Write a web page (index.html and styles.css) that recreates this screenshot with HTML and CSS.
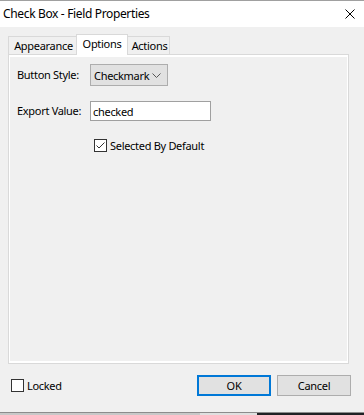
FILE: index.html
```html
<!DOCTYPE html>
<html>
<head>
<meta charset="utf-8">
<link rel="stylesheet" href="styles.css">
</head>
<body>
<div class="window">
  <div class="topline"></div>
  <div class="titlebar">
    <span class="title">Check Box - Field Properties</span>
    <svg class="close" width="10" height="10" viewBox="0 0 10 10"><path d="M0.5 0.5 L9.5 9.5 M9.5 0.5 L0.5 9.5" stroke="#000" stroke-width="1" fill="none"/></svg>
  </div>
  <div class="tabs">
    <div class="tab tab-appearance">Appearance</div>
    <div class="tab tab-options active">Options</div>
    <div class="tab tab-actions">Actions</div>
  </div>
  <div class="panel">
    <div class="page">
      <div class="form">
        <span class="label">Button Style:</span>
        <div class="select">
          <span>Checkmark</span>
          <svg class="chev" width="9" height="5" viewBox="0 0 9 5"><path d="M0.5 0.5 L4.5 4.5 L8.5 0.5" stroke="#555" stroke-width="1" fill="none"/></svg>
        </div>
        <span class="label">Export Value:</span>
        <div class="input">checked</div>
        <span></span>
        <div class="check default-check">
          <span class="box">
            <svg width="11" height="11" viewBox="0 0 11 11"><path d="M1.5 5.5 L4 8 L9.5 2.5" stroke="#333" stroke-width="1" fill="none"/></svg>
          </span>
          <span>Selected By Default</span>
        </div>
      </div>
    </div>
  </div>
  <div class="footer">
    <div class="check locked">
      <span class="box"></span>
      <span>Locked</span>
    </div>
    <div class="buttons">
      <div class="btn primary">OK</div>
      <div class="btn">Cancel</div>
    </div>
  </div>
  <div class="taskbar">
    <div class="seg seg1"></div>
    <div class="seg seg2"></div>
    <div class="seg seg3"></div>
  </div>
</div>
</body>
</html>
```

FILE: styles.css
```css
* { box-sizing: border-box; }
html, body {
  margin: 0;
  padding: 0;
}
body {
  width: 364px;
  height: 415px;
  overflow: hidden;
  background: #f0f0f0;
  font-family: "Noto Sans", "Open Sans", sans-serif;
  font-size: 11px;
  letter-spacing: -0.3px;
  color: #000;
}
.window {
  display: flex;
  flex-direction: column;
  width: 364px;
  height: 415px;
  background: #f0f0f0;
}
.topline {
  height: 1px;
  background: #a0a0a0;
}
.titlebar {
  height: 26px;
  background: #fff;
  display: flex;
  align-items: center;
  justify-content: space-between;
  padding: 0 9px 0 3px;
}
.title {
  font-size: 12px;
  line-height: 16px;
  letter-spacing: -0.35px;
}
.close { display: block; }

.tabs {
  display: flex;
  align-items: flex-end;
  margin: 7px 0 0 8px;
  height: 20px;
  position: relative;
  z-index: 2;
}
.tab {
  height: 18px;
  border: 1px solid #d9d9d9;
  border-bottom: none;
  background: #f0f0f0;
  display: flex;
  align-items: center;
  justify-content: center;
  line-height: 14px;
  padding-top: 1px;
}
.tab-appearance { width: 69px; padding-left: 2px; }
.tab-options { width: 52px; margin-left: -1px; }
.tab-actions { width: 43px; margin-left: -1px; padding-left: 2px; }
.tab.active {
  height: 21px;
  margin-bottom: -1px;
  background: #fff;
  padding-top: 0;
  padding-bottom: 2px;
}
.panel {
  margin: 0 15px 0 8px;
  height: 310px;
  border: 1px solid #d9d9d9;
  background: #fff;
  padding: 2px 1px 2px 1px;
}
.page {
  height: 100%;
  background: #f0f0f0;
  padding: 7px 0 0 7px;
}
.form {
  display: grid;
  grid-template-columns: 73px auto;
  align-items: center;
  justify-items: start;
  row-gap: 15px;
}
.label { line-height: 14px; }
.select {
  width: 78px;
  height: 22px;
  background: #e1e1e1;
  border: 1px solid #adadad;
  display: flex;
  align-items: center;
  justify-content: space-between;
  padding: 0 6px 0 3px;
}
.chev { display: block; margin-top: 1px; }
.input {
  width: 121px;
  height: 20px;
  background: #fff;
  border: 1px solid #a0a0a0;
  display: flex;
  align-items: center;
  padding-left: 2px;
}
.check {
  display: flex;
  align-items: center;
}
.default-check {
  margin: 2px 0 0 4px;
  gap: 3px;
}
.box {
  width: 13px;
  height: 13px;
  border: 1px solid #333;
  background: #fff;
  display: block;
}
.box svg { display: block; }

.footer {
  display: flex;
  align-items: center;
  justify-content: space-between;
  height: 21px;
  margin: 11px 13px 16px 11px;
}
.locked { gap: 3px; }
.buttons {
  display: flex;
  gap: 6px;
}
.btn {
  width: 74px;
  height: 21px;
  background: #e1e1e1;
  border: 1px solid #adadad;
  display: flex;
  align-items: center;
  justify-content: center;
}
.btn.primary {
  border: 2px solid #0078d7;
}
.taskbar {
  height: 3px;
  display: flex;
  border-top: 1px solid #8c8c8c;
}
.seg { height: 2px; }
.seg1 { width: 200px; background: #c8c8c8; }
.seg2 { width: 57px; background: #e0e0e0; }
.seg3 { flex: 1; background: #202124; }
```
